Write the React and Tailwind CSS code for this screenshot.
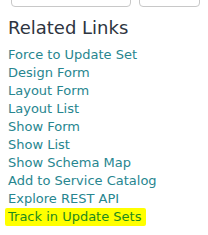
export default function App() {
  const links = [
    "Force to Update Set",
    "Design Form",
    "Layout Form",
    "Layout List",
    "Show Form",
    "Show List",
    "Show Schema Map",
    "Add to Service Catalog",
    "Explore REST API",
  ];
  return (
    <div className="w-[208px] h-[235px] bg-white overflow-hidden" style={{ fontFamily: "Verdana, 'DejaVu Sans', sans-serif" }}>
      {/* boxes cut off at top */}
      <div className="flex gap-[8px] pl-[11px] -mt-[20px]">
        <div className="w-[120px] h-[27px] border border-[#c8c8c8] rounded-[4px]" />
        <div className="w-[61px] h-[27px] border border-[#c8c8c8] rounded-[4px]" />
      </div>
      <div className="pl-[8px] pt-[9px]">
        <h2 className="text-[18px] leading-[24px] text-[#2e3540] mb-[6px]">Related Links</h2>
        <ul className="text-[13px] leading-[18px] text-[#27868f]">
          {links.map((l) => (
            <li key={l}>{l}</li>
          ))}
          <li className="-ml-[3px]">
            <span className="inline-block bg-[#ffff00] text-[#1e8a1e] pl-[3px] pr-[5px] rounded-[2px]">
              Track in Update Sets
            </span>
          </li>
        </ul>
      </div>
    </div>
  );
}
